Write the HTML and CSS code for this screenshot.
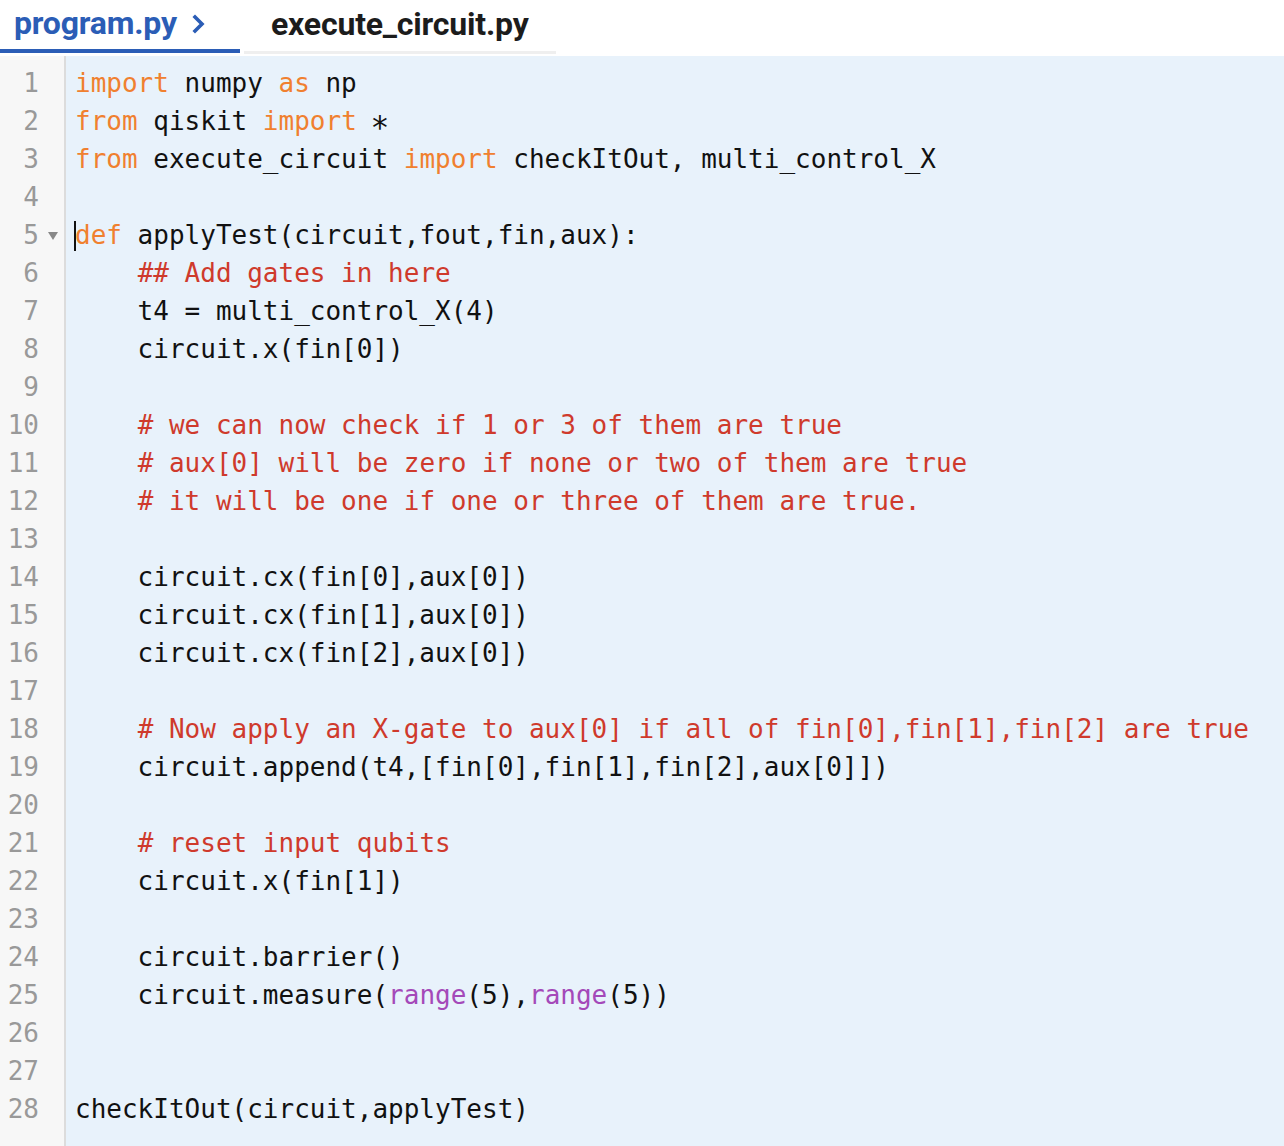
FILE: index.html
```html
<!DOCTYPE html>
<html>
<head>
<meta charset="utf-8">
<link rel="stylesheet" href="styles.css">
</head>
<body>
<div class="tabs">
  <div class="tab active"><span class="tab-name">program.py</span><svg class="chev" width="14" height="20" viewBox="0 0 14 20"><polyline points="3,3 10,10 3,17" fill="none" stroke="#2b5db6" stroke-width="3.6" stroke-linecap="square"/></svg></div>
  <div class="tab"><span class="tab-name">execute_circuit.py</span></div>
</div>
<div class="editor">
  <div class="gutter">
    <div class="ln">1</div><div class="ln">2</div><div class="ln">3</div><div class="ln">4</div>
    <div class="ln">5<svg class="fold" width="10" height="8" viewBox="0 0 10 8"><polygon points="0,0 10,0 5,8" fill="#888888"/></svg></div><div class="ln">6</div><div class="ln">7</div><div class="ln">8</div>
    <div class="ln">9</div><div class="ln">10</div><div class="ln">11</div><div class="ln">12</div>
    <div class="ln">13</div><div class="ln">14</div><div class="ln">15</div><div class="ln">16</div>
    <div class="ln">17</div><div class="ln">18</div><div class="ln">19</div><div class="ln">20</div>
    <div class="ln">21</div><div class="ln">22</div><div class="ln">23</div><div class="ln">24</div>
    <div class="ln">25</div><div class="ln">26</div><div class="ln">27</div><div class="ln">28</div>
  </div>
  <div class="code">
    <div class="line"><span class="kw">import</span> numpy <span class="kw">as</span> np</div>
    <div class="line"><span class="kw">from</span> qiskit <span class="kw">import</span> <span class="star">*</span></div>
    <div class="line"><span class="kw">from</span> execute_circuit <span class="kw">import</span> checkItOut, multi_control_X</div>
    <div class="line"> </div>
    <div class="line"><span class="cursor"></span><span class="kw">def</span> applyTest(circuit,fout,fin,aux):</div>
    <div class="line">    <span class="cm">## Add gates in here</span></div>
    <div class="line">    t4 = multi_control_X(4)</div>
    <div class="line">    circuit.x(fin[0])</div>
    <div class="line"> </div>
    <div class="line">    <span class="cm"># we can now check if 1 or 3 of them are true</span></div>
    <div class="line">    <span class="cm"># aux[0] will be zero if none or two of them are true</span></div>
    <div class="line">    <span class="cm"># it will be one if one or three of them are true.</span></div>
    <div class="line"> </div>
    <div class="line">    circuit.cx(fin[0],aux[0])</div>
    <div class="line">    circuit.cx(fin[1],aux[0])</div>
    <div class="line">    circuit.cx(fin[2],aux[0])</div>
    <div class="line"> </div>
    <div class="line">    <span class="cm"># Now apply an X-gate to aux[0] if all of fin[0],fin[1],fin[2] are true</span></div>
    <div class="line">    circuit.append(t4,[fin[0],fin[1],fin[2],aux[0]])</div>
    <div class="line"> </div>
    <div class="line">    <span class="cm"># reset input qubits</span></div>
    <div class="line">    circuit.x(fin[1])</div>
    <div class="line"> </div>
    <div class="line">    circuit.barrier()</div>
    <div class="line">    circuit.measure(<span class="bi">range</span>(5),<span class="bi">range</span>(5))</div>
    <div class="line"> </div>
    <div class="line"> </div>
    <div class="line">checkItOut(circuit,applyTest)</div>
  </div>
</div>
</body>
</html>
```

FILE: styles.css
```css
html, body {
  margin: 0;
  padding: 0;
  background: #ffffff;
}

body {
  width: 1284px;
  height: 1146px;
  overflow: hidden;
  display: flex;
  flex-direction: column;
}

.tabs {
  display: flex;
  gap: 4px;
  height: 56px;
  flex: none;
  align-items: flex-start;
}

.tab {
  display: flex;
  align-items: center;
  box-sizing: border-box;
  height: 53px;
  padding-bottom: 4px;
  font-family: Roboto, "Liberation Sans", sans-serif;
  font-weight: 700;
  font-size: 32px;
  color: #1c1c1c;
  border-bottom: 3px solid #efefef;
}

.tab.active {
  width: 240px;
  padding-left: 14px;
  color: #2b5db6;
  border-bottom: 4px solid #2b5db6;
}

.tab:not(.active) {
  width: 312px;
  padding-left: 27px;
  height: 54px;
}

.tab-name {
  letter-spacing: -0.2px;
}

.chev {
  margin-left: 15px;
  margin-top: 2px;
}

.editor {
  flex: 1;
  display: flex;
  background: #e8f2fb;
  font-family: "DejaVu Sans Mono", "Liberation Mono", monospace;
  font-size: 26px;
  line-height: 38px;
}

.gutter {
  flex: none;
  width: 66px;
  box-sizing: border-box;
  background: #f7f7f7;
  border-right: 2px solid #dcdcdc;
  padding-top: 8px;
}

.ln {
  position: relative;
  height: 38px;
  padding-right: 25px;
  text-align: right;
  color: #999999;
}

.fold {
  position: absolute;
  left: 48px;
  top: 16px;
}

.code {
  flex: 1;
  padding-top: 8px;
  padding-left: 9px;
  color: #111111;
}

.line {
  height: 38px;
  position: relative;
  white-space: pre;
}

.star {
  display: inline-block;
  transform: translateY(6px) scale(1.2);
}

.kw {
  color: #f0802f;
}

.cm {
  color: #cf3a2c;
}

.bi {
  color: #a449b9;
}

.cursor {
  position: absolute;
  left: -1px;
  top: 5px;
  width: 2px;
  height: 30px;
  background: #111111;
}
```
